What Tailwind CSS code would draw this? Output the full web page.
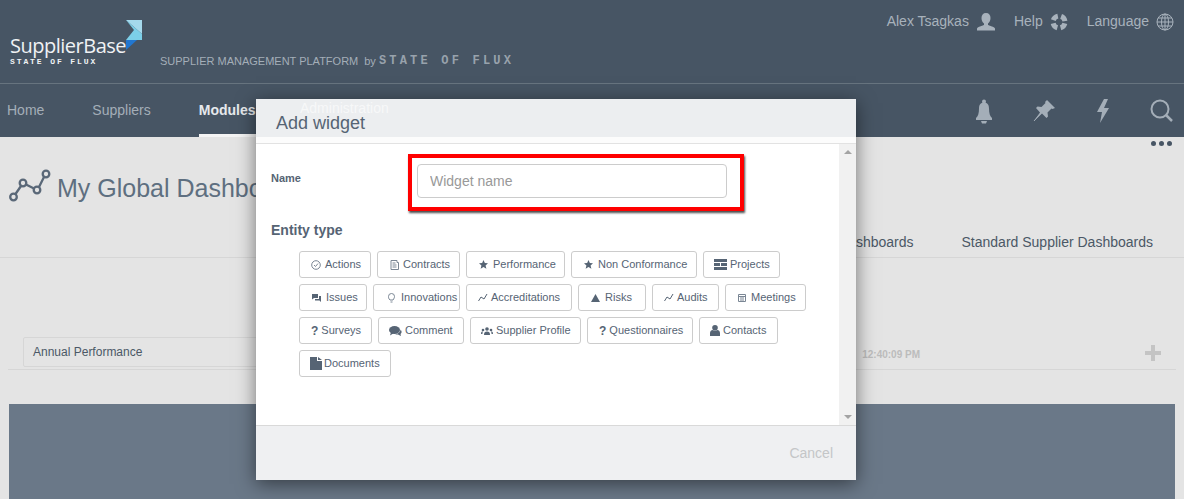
<!DOCTYPE html>
<html lang="en">
<head>
  <meta charset="UTF-8">
  <title>Add widget</title>
  <script src="https://cdn.jsdelivr.net/npm/@tailwindcss/browser@4"></script>
</head>
<body class="relative w-[1184px] h-[499px] overflow-hidden bg-[#e4e4e4] font-['Liberation_Sans',sans-serif] text-[#5a6878]">

  <!-- top bar -->
  <header class="h-[84px] bg-[#475564] border-b border-[#67747f] flex justify-between">
    <div class="flex items-start pl-[10px]">
      <div class="w-[150px] pt-[20px]">
        <div class="flex items-start h-[30px]">
          <span class="mt-[14px] text-[20px] leading-[24px] tracking-[-0.5px] text-[#f0f2f4] font-['Open_Sans',sans-serif]">SupplierBase</span>
          <svg class="w-[18px] h-[30px] -ml-[1px]" viewBox="0 0 18 30">
            <polygon points="1,0 17,0 17,14" fill="#a5d9ec"/>
            <polygon points="1,0 17,14 17,20 1,20 9,10" fill="#7ccfe8" />
            <polygon points="1,20 12,20 1,30" fill="#2277d0"/>
          </svg>
        </div>
        <div class="mt-[7px] text-[8px] leading-[10px] font-bold tracking-[1.9px] text-[#f0f2f4] font-['Liberation_Mono',monospace]">STATE OF FLUX</div>
      </div>
      <div class="flex items-center pt-[53px] ml-0 text-[#a4aeb8]">
        <span class="text-[11px] leading-[16px]">SUPPLIER MANAGEMENT PLATFORM</span>
        <span class="text-[11px] leading-[16px] ml-[6px]">by</span>
        <span class="text-[12px] leading-[16px] ml-[3px] font-bold tracking-[3.2px] font-['Liberation_Mono',monospace] text-[#98a2ac]">STATE OF FLUX</span>
      </div>
    </div>
    <div class="flex items-start pt-[12px] pr-[10px] text-[14px] leading-[18px] text-[#a8b2bc]">
      <span>Alex Tsagkas</span>
      <svg class="w-[20px] h-[20px] ml-[7px]" viewBox="0 0 20 20" fill="#a8b2bc"><path d="M10 1c3 0 4.5 2 4.5 5 0 2.500-1 4.500-2.500 5.500v1.500c2 1 6 1.500 7 3.500v2H1v-2c1-2 5-2.500 7-3.500v-1.500C6.500 10.500 5.500 8.500 5.500 6c0-3 1.500-5 4.500-5z"/></svg>
      <span class="ml-[18px]">Help</span>
      <svg class="w-[18px] h-[18px] ml-[7px] mt-[1px]" viewBox="0 0 18 18" fill="none" stroke="#a8b2bc"><circle cx="9" cy="9" r="6" stroke-width="5" stroke-dasharray="6 3.420" stroke-dashoffset="-1.500"/></svg>
      <span class="ml-[19px]">Language</span>
      <svg class="w-[18px] h-[18px] ml-[7px] mt-[1px]" viewBox="0 0 18 18" fill="none" stroke="#a8b2bc" stroke-width="1"><circle cx="9" cy="9" r="8"/><ellipse cx="9" cy="9" rx="3.500" ry="8"/><path d="M9 1v16M1 9h16M2 5h14M2 13h14"/></svg>
    </div>
  </header>

  <!-- nav -->
  <nav class="h-[53px] bg-[#475564] flex justify-between text-[14px]">
    <div class="flex pl-[7px]">
      <a class="pt-[16px] text-[#a4aeb8] mr-[48px]">Home</a>
      <a class="pt-[16px] text-[#a4aeb8] mr-[48px]">Suppliers</a>
      <a class="pt-[16px] font-bold text-[#e6e9ec] border-b-[3px] border-[#f4f4f4] h-[53px]">Modules</a>
    </div>
    <div class="flex items-start pt-[15px] pr-[11px] gap-[40px]">
      <svg class="w-[18px] h-[26px]" viewBox="0 0 18 26" fill="#a4aeb8"><circle cx="9" cy="2.500" r="2"/><path d="M9 3.500c3.500 0 5 2.500 5 6 0 5 1 7.500 3 9.500v2H1v-2c2-2 3-4.500 3-9.500 0-3.500 1.500-6 5-6z"/><path d="M6 22h6l-1 2.500H7z"/></svg>
      <svg class="w-[23px] h-[23px]" viewBox="0 0 23 23" fill="#a4aeb8"><path d="M14 1l8 8-2.500 1-1-.5-4 4 .5 4-1.500 1.500-4.500-4.500L1 22l6-8.500L3 9l1.500-1.500 4 .5 4-4-.5-1z"/><path d="M1 22l8-9" stroke="#a4aeb8"/></svg>
      <svg class="w-[14px] h-[24px]" viewBox="0 0 14 24" fill="#a4aeb8"><path d="M8 0L1 13h5l-2 11 9-15H8l4-9z"/></svg>
      <svg class="w-[23px] h-[23px]" viewBox="0 0 23 23" fill="none" stroke="#a4aeb8" stroke-width="2"><circle cx="10" cy="10" r="8.500"/><path d="M16 16l6 6" stroke-width="2.500"/></svg>
    </div>
  </nav>

  <!-- page behind the dialog -->
  <main class="relative h-[362px]">
    <div class="flex justify-end pt-[4px] pr-[12px] gap-[3px]">
      <i class="w-[5px] h-[5px] rounded-full bg-[#475564]"></i>
      <i class="w-[5px] h-[5px] rounded-full bg-[#475564]"></i>
      <i class="w-[5px] h-[5px] rounded-full bg-[#475564]"></i>
    </div>
    <div class="h-[112px] border-b border-[#d6d6d6] flex items-start justify-between">
      <div class="flex items-start pl-[9px] pt-[23px]">
        <svg class="w-[42px] h-[34px]" viewBox="0 0 42 34" fill="none" stroke="#5a6878" stroke-width="2.300"><circle cx="4.500" cy="28" r="3.300"/><circle cx="14" cy="14" r="3.300"/><circle cx="28" cy="21" r="3.300"/><circle cx="37" cy="5" r="3.300"/><path d="M6.500 25L12 17M17 15.500L25 19.500M30 18L35 8"/></svg>
        <h1 class="ml-[6px] mt-[4px] text-[25px] leading-[30px] text-[#5e6f80] whitespace-nowrap">My Global Dashboard</h1>
      </div>
      <div class="flex pt-[87px] pr-[31px] text-[14px] leading-[18px] text-[#4b5866]">
        <span>Dashboards</span>
        <span class="ml-[48px]">Standard Supplier Dashboards</span>
      </div>
    </div>
    <div class="mx-[8px] mt-[79px] h-[33px] border-b border-[#d6d6d6] flex justify-between">
      <div class="ml-[15px] w-[300px] h-[30px] border border-[#d6d6d6] rounded-[2px] pl-[9px] text-[12px] leading-[28px] text-[#4b5866]">Annual Performance</div>
      <div class="flex items-start">
        <span class="mt-[11px] text-[10px] leading-[14px] font-bold text-[#bcbcbc]">12:40:09 PM</span>
        <svg class="w-[16px] h-[16px] ml-[225px] mt-[8px] mr-[15px]" viewBox="0 0 16 16" fill="#c4c4c4"><path d="M6 0h4v6h6v4h-6v6H6v-6H0V6h6z"/></svg>
      </div>
    </div>
    <div class="mx-[9px] mt-[34px] h-[100px] bg-[#6a7888]"></div>
  </main>

  <!-- dialog -->
  <section class="absolute left-[256px] top-[99px] w-[600px] h-[381px] bg-white flex flex-col shadow-[0_4px_18px_rgba(0,0,0,0.5)]">
    <div class="h-[38px] bg-[#eceef0] pl-[20px] pt-[13px] text-[18px] leading-[22px] text-[#566474]">Add widget</div>
    <div class="h-[7px] bg-[#fcfcfc] border-b border-[#e2e2e2]"></div>
    <div class="flex-1 flex min-h-0">
      <div class="flex-1 pl-[15px]">
        <div class="flex h-[66px]">
          <label class="w-[146px] pt-[28px] text-[11px] leading-[13px] font-bold text-[#566474]">Name</label>
          <input class="mt-[20px] w-[310px] h-[34px] border border-[#cccccc] rounded-[4px] px-[12px] text-[14px] placeholder:text-[#999999]" placeholder="Widget name">
        </div>
        <h2 class="mt-[11px] text-[14px] leading-[18px] font-bold text-[#566474]">Entity type</h2>
        <div class="ml-[28px] mt-[12px] w-[535px] flex flex-wrap gap-[6px] text-[11px] text-[#566474]">
          <span class="h-[27px] w-[72px] flex items-center gap-[4px] pl-[11px] border border-[#cccccc] rounded-[3px]"><svg class="w-[10px] h-[10px]" viewBox="0 0 10 10" fill="none" stroke="#7a8694"><circle cx="5" cy="5" r="4.300"/><path d="M3 5l1.500 1.500L7 3.500"/></svg>Actions</span>
          <span class="h-[27px] w-[83px] flex items-center gap-[4px] pl-[12px] border border-[#cccccc] rounded-[3px]"><svg class="w-[9px] h-[10px]" viewBox="0 0 9 10" fill="none" stroke="#7a8694"><path d="M1 .5h6v2h1.500v7H1zM2.500 3h3M2.500 5h4M2.500 7h4"/></svg>Contracts</span>
          <span class="h-[27px] w-[99px] flex items-center gap-[5px] pl-[12px] border border-[#cccccc] rounded-[3px]"><svg class="w-[9px] h-[9px]" viewBox="0 0 10 10" fill="#566474"><path d="M5 0l1.500 3.400 3.500.3-2.700 2.300.9 3.600L5 7.700 1.800 9.600l.9-3.600L0 3.700l3.500-.3z"/></svg>Performance</span>
          <span class="h-[27px] w-[126px] flex items-center gap-[5px] pl-[12px] border border-[#cccccc] rounded-[3px]"><svg class="w-[9px] h-[9px]" viewBox="0 0 10 10" fill="#566474"><path d="M5 0l1.500 3.400 3.500.3-2.700 2.300.9 3.600L5 7.700 1.800 9.600l.9-3.600L0 3.700l3.500-.3z"/></svg>Non Conformance</span>
          <span class="h-[27px] w-[77px] flex items-center gap-[3px] pl-[10px] border border-[#cccccc] rounded-[3px]"><svg class="w-[13px] h-[11px]" viewBox="0 0 13 11" fill="#566474"><path d="M0 0h13v3H0zM0 4h6v3H0zM7 4h6v3H7zM0 8h13v3H0z"/></svg>Projects</span>

          <span class="h-[27px] w-[68px] flex items-center gap-[5px] pl-[12px] border border-[#cccccc] rounded-[3px]"><svg class="w-[9px] h-[8px]" viewBox="0 0 9 8" fill="#566474"><path d="M0 0h6v4H2L0 5.500zM7 2h2v6L7.500 6.500H3V5h4z"/></svg>Issues</span>
          <span class="h-[27px] w-[87px] flex items-center gap-[6px] pl-[14px] border border-[#cccccc] rounded-[3px]"><svg class="w-[7px] h-[10px]" viewBox="0 0 7 10" fill="none" stroke="#7a8694"><path d="M2 7C.5 5.500.5 4.500.5 3.500a3 3 0 0 1 6 0c0 1-.5 2-1.500 3.500zM2.500 9h2"/></svg>Innovations</span>
          <span class="h-[27px] w-[106px] flex items-center gap-[3px] pl-[11px] border border-[#cccccc] rounded-[3px]"><svg class="w-[10px] h-[9px]" viewBox="0 0 10 9" fill="none" stroke="#566474"><path d="M.5 8L3 4l3 2 3-5"/></svg>Accreditations</span>
          <span class="h-[27px] w-[68px] flex items-center gap-[5px] pl-[12px] border border-[#cccccc] rounded-[3px]"><svg class="w-[9px] h-[8px]" viewBox="0 0 9 8" fill="#566474"><path d="M4.500 0L9 8H0z"/></svg>Risks</span>
          <span class="h-[27px] w-[67px] flex items-center gap-[3px] pl-[11px] border border-[#cccccc] rounded-[3px]"><svg class="w-[10px] h-[9px]" viewBox="0 0 10 9" fill="none" stroke="#566474"><path d="M.5 8L3 4l3 2 3-5"/></svg>Audits</span>
          <span class="h-[27px] w-[81px] flex items-center gap-[5px] pl-[12px] border border-[#cccccc] rounded-[3px]"><svg class="w-[8px] h-[9px]" viewBox="0 0 8 9" fill="none" stroke="#7a8694"><path d="M.5 1.500h7v7h-7zM.5 3.500h7M2 5h4M2 7h4"/></svg>Meetings</span>

          <span class="h-[27px] w-[73px] flex items-center gap-[3px] pl-[11px] border border-[#cccccc] rounded-[3px]"><b class="text-[12px] leading-none">?</b>Surveys</span>
          <span class="h-[27px] w-[86px] flex items-center gap-[3px] pl-[10px] border border-[#cccccc] rounded-[3px]"><svg class="w-[13px] h-[10px]" viewBox="0 0 13 10" fill="#566474"><ellipse cx="5.500" cy="4" rx="5.500" ry="4"/><path d="M2 6L1 9.500 5 7zM11.500 3.500C13 5 13 7 11.500 8l.5 2-3-1.500c-1 0-2 0-3-.5 3 0 5.500-2 5.500-4.500z"/></svg>Comment</span>
          <span class="h-[27px] w-[111px] flex items-center gap-[3px] pl-[10px] border border-[#cccccc] rounded-[3px]"><svg class="w-[12px] h-[8px]" viewBox="0 0 12 8" fill="#566474"><circle cx="6" cy="2" r="1.800"/><circle cx="2" cy="3" r="1.300"/><circle cx="10" cy="3" r="1.300"/><path d="M3 8c0-3 1-3.500 3-3.500S9 5 9 8zM0 7c0-2 .5-2.500 2-2.500-.5 1-.5 1.500-.5 2.500zM12 7c0-2-.5-2.500-2-2.500.5 1 .5 1.500.5 2.500z"/></svg>Supplier Profile</span>
          <span class="h-[27px] w-[106px] flex items-center gap-[3px] pl-[11px] border border-[#cccccc] rounded-[3px]"><b class="text-[12px] leading-none">?</b>Questionnaires</span>
          <span class="h-[27px] w-[79px] flex items-center gap-[3px] pl-[10px] border border-[#cccccc] rounded-[3px]"><svg class="w-[10px] h-[11px]" viewBox="0 0 10 11" fill="#566474"><circle cx="5" cy="2.800" r="2.800"/><path d="M0 11V8c0-2 1.500-3 2.500-3 1.500 1 3.500 1 5 0C8.500 5 10 6 10 8v3z"/></svg>Contacts</span>

          <span class="h-[27px] w-[92px] flex items-center gap-[2px] pl-[10px] border border-[#cccccc] rounded-[3px]"><svg class="w-[12px] h-[13px]" viewBox="0 0 12 13" fill="#566474"><path d="M0 0h7v4h5v9H0zM8 0l4 3H8z"/></svg>Documents</span>
        </div>
      </div>
      <!-- scrollbar -->
      <div class="w-[17px] bg-[#f1f1f1] flex flex-col justify-between items-center py-[6px]">
        <i class="w-0 h-0 border-x-[4px] border-x-transparent border-b-[4px] border-b-[#a3a3a3]"></i>
        <i class="w-0 h-0 border-x-[4px] border-x-transparent border-t-[4px] border-t-[#a3a3a3]"></i>
      </div>
    </div>
    <div class="h-[55px] bg-[#eff0f2] border-t border-[#d9d9d9] flex justify-end pr-[23px] pt-[19px] text-[14px] leading-[17px] text-[#c4c6c8]">Cancel</div>

    <!-- nav item showing over the dialog -->
    <span class="absolute left-[44px] top-[1px] text-[14px] leading-[16px] text-white/60">Administration</span>
    <!-- red highlight drawn on the screenshot -->
    <div class="absolute left-[152px] top-[55px] w-[336px] h-[57px] border-[4px] border-[#ff0000] shadow-[1px_2px_2px_rgba(0,0,0,0.7)]"></div>
  </section>
</body>
</html>
